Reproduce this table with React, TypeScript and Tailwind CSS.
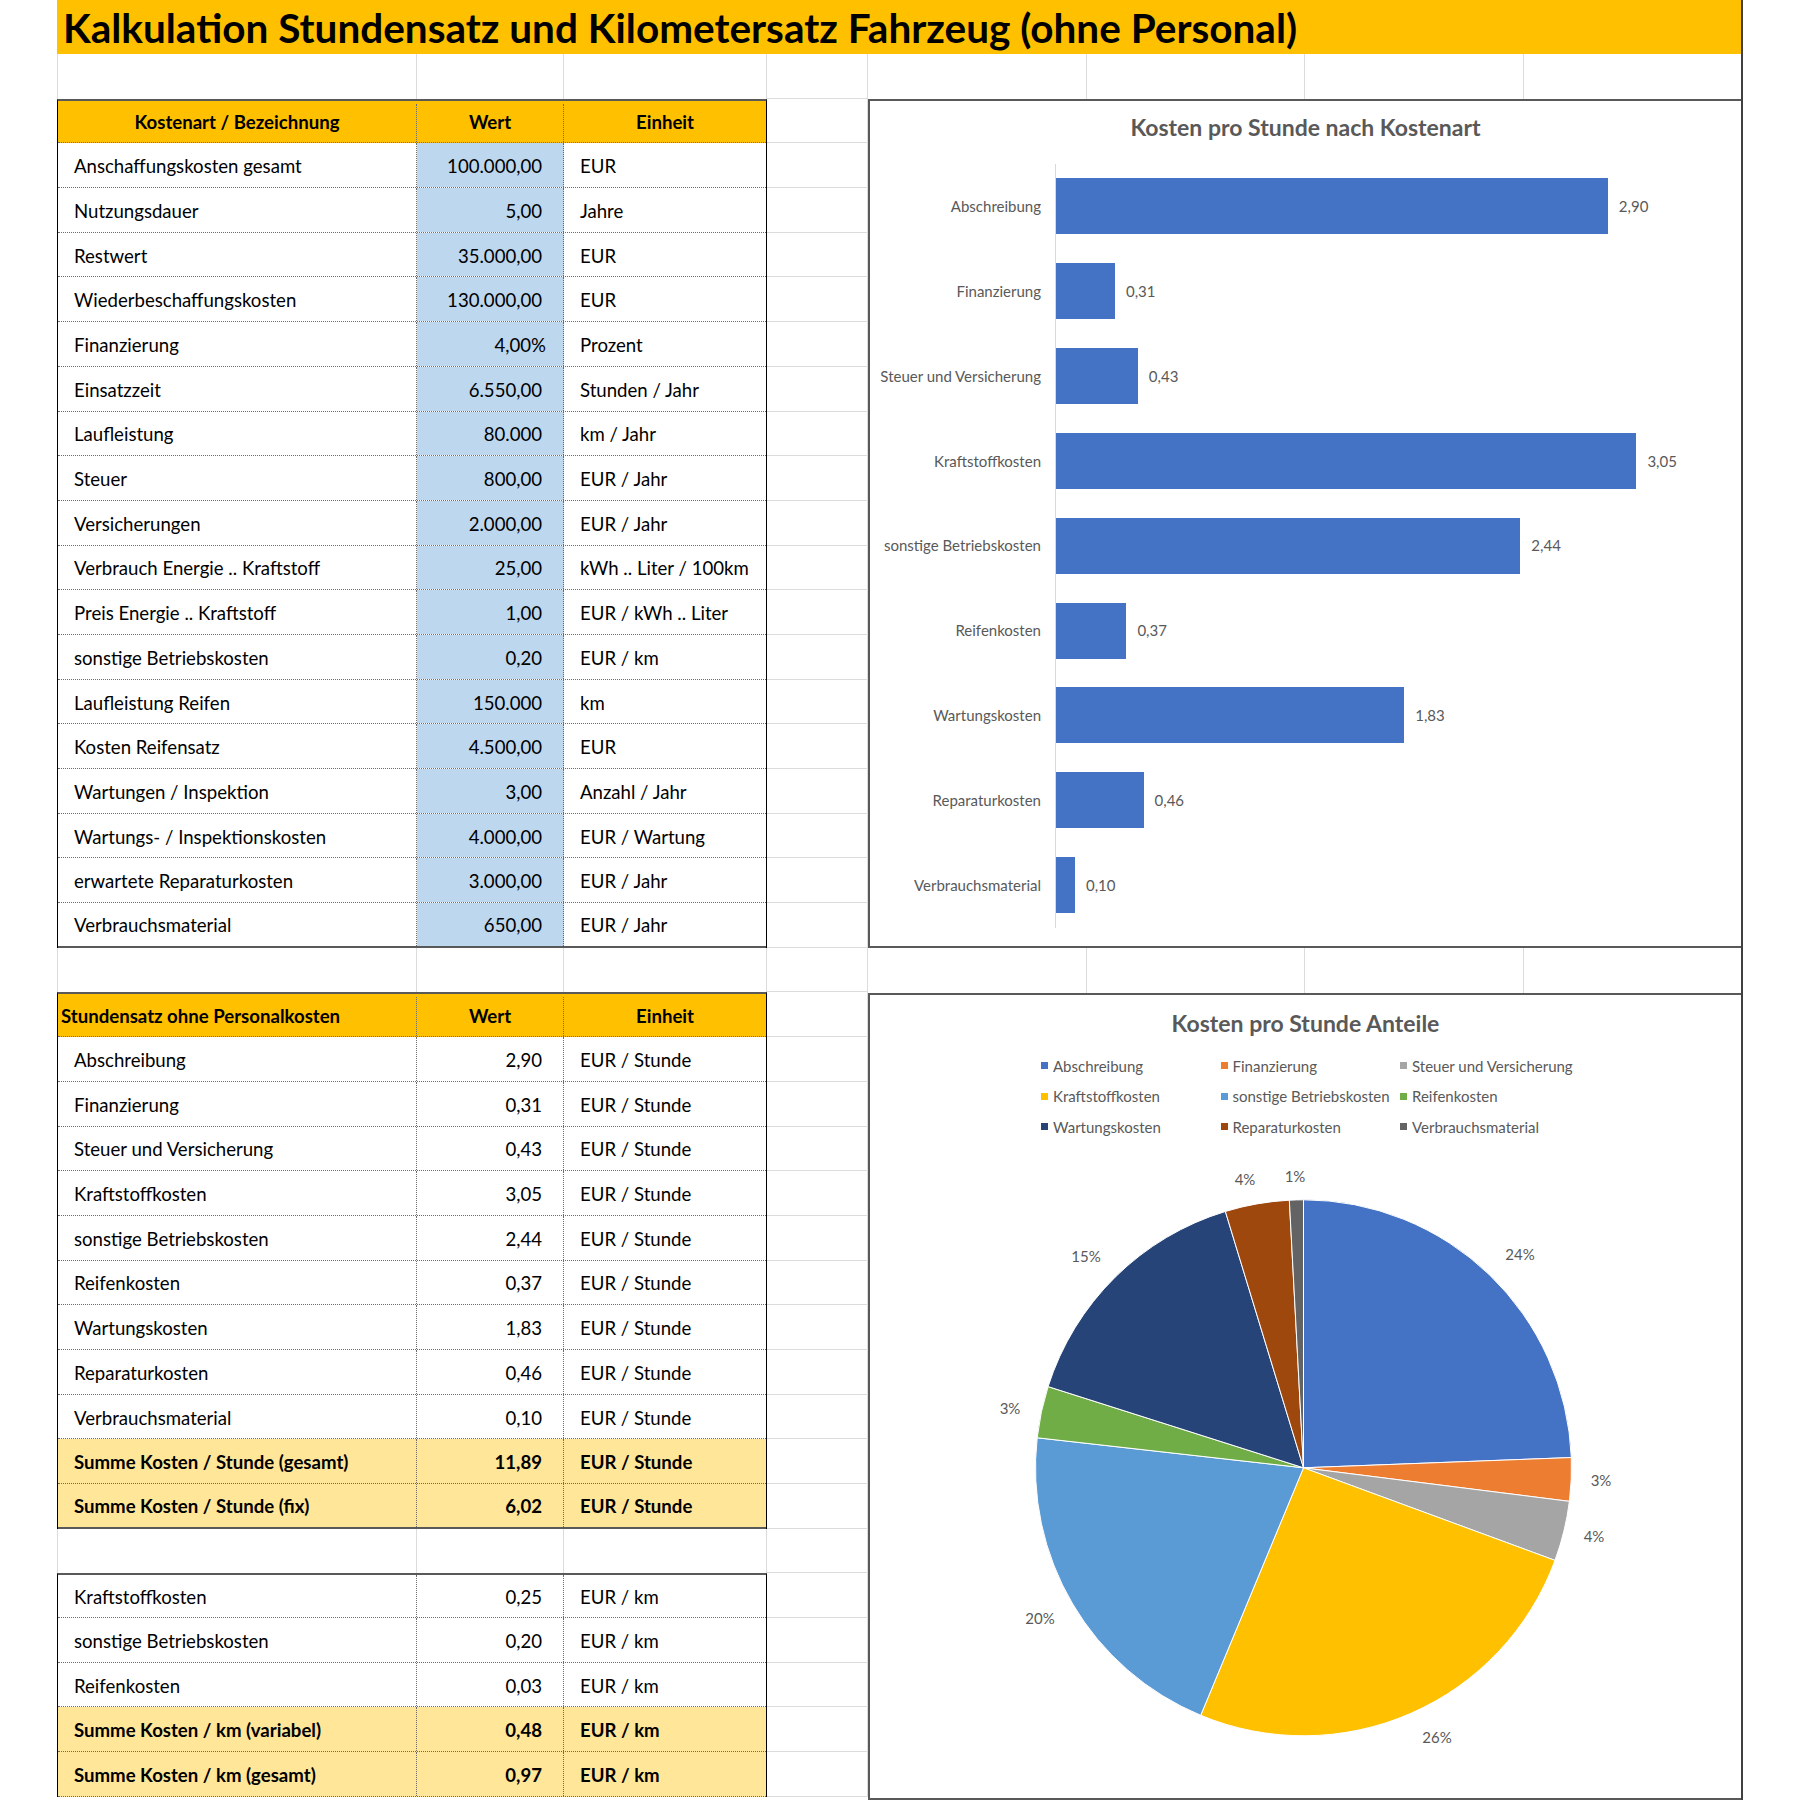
import { ReactNode } from "react";

type Line = { label: string; value: string; unit: string; sum?: boolean; pr?: string };

const inputs: Line[] = [
  { label: "Anschaffungskosten gesamt", value: "100.000,00", unit: "EUR" },
  { label: "Nutzungsdauer", value: "5,00", unit: "Jahre" },
  { label: "Restwert", value: "35.000,00", unit: "EUR" },
  { label: "Wiederbeschaffungskosten", value: "130.000,00", unit: "EUR" },
  { label: "Finanzierung", value: "4,00%", unit: "Prozent", pr: "pr-[17px]" },
  { label: "Einsatzzeit", value: "6.550,00", unit: "Stunden / Jahr" },
  { label: "Laufleistung", value: "80.000", unit: "km / Jahr" },
  { label: "Steuer", value: "800,00", unit: "EUR / Jahr" },
  { label: "Versicherungen", value: "2.000,00", unit: "EUR / Jahr" },
  { label: "Verbrauch Energie .. Kraftstoff", value: "25,00", unit: "kWh .. Liter / 100km" },
  { label: "Preis Energie .. Kraftstoff", value: "1,00", unit: "EUR / kWh .. Liter" },
  { label: "sonstige Betriebskosten", value: "0,20", unit: "EUR / km" },
  { label: "Laufleistung Reifen", value: "150.000", unit: "km" },
  { label: "Kosten Reifensatz", value: "4.500,00", unit: "EUR" },
  { label: "Wartungen / Inspektion", value: "3,00", unit: "Anzahl / Jahr" },
  { label: "Wartungs- / Inspektionskosten", value: "4.000,00", unit: "EUR / Wartung" },
  { label: "erwartete Reparaturkosten", value: "3.000,00", unit: "EUR / Jahr" },
  { label: "Verbrauchsmaterial", value: "650,00", unit: "EUR / Jahr" },
];

const hourly: Line[] = [
  { label: "Abschreibung", value: "2,90", unit: "EUR / Stunde" },
  { label: "Finanzierung", value: "0,31", unit: "EUR / Stunde" },
  { label: "Steuer und Versicherung", value: "0,43", unit: "EUR / Stunde" },
  { label: "Kraftstoffkosten", value: "3,05", unit: "EUR / Stunde" },
  { label: "sonstige Betriebskosten", value: "2,44", unit: "EUR / Stunde" },
  { label: "Reifenkosten", value: "0,37", unit: "EUR / Stunde" },
  { label: "Wartungskosten", value: "1,83", unit: "EUR / Stunde" },
  { label: "Reparaturkosten", value: "0,46", unit: "EUR / Stunde" },
  { label: "Verbrauchsmaterial", value: "0,10", unit: "EUR / Stunde" },
  { label: "Summe Kosten / Stunde (gesamt)", value: "11,89", unit: "EUR / Stunde", sum: true },
  { label: "Summe Kosten / Stunde (fix)", value: "6,02", unit: "EUR / Stunde", sum: true },
];

const perKm: Line[] = [
  { label: "Kraftstoffkosten", value: "0,25", unit: "EUR / km" },
  { label: "sonstige Betriebskosten", value: "0,20", unit: "EUR / km" },
  { label: "Reifenkosten", value: "0,03", unit: "EUR / km" },
  { label: "Summe Kosten / km (variabel)", value: "0,48", unit: "EUR / km", sum: true },
  { label: "Summe Kosten / km (gesamt)", value: "0,97", unit: "EUR / km", sum: true },
];

/* chart data: value, fill, legend swatch class, pie label + its spot */
const costs = [
  { name: "Abschreibung", v: 2.9, text: "2,90", fill: "#4472C4", sw: "bg-[#4472C4]", pct: "24%", lx: 650, ly: 112 },
  { name: "Finanzierung", v: 0.31, text: "0,31", fill: "#ED7D31", sw: "bg-[#ED7D31]", pct: "3%", lx: 731, ly: 338 },
  { name: "Steuer und Versicherung", v: 0.43, text: "0,43", fill: "#A5A5A5", sw: "bg-[#A5A5A5]", pct: "4%", lx: 724, ly: 394 },
  { name: "Kraftstoffkosten", v: 3.05, text: "3,05", fill: "#FFC000", sw: "bg-[#FFC000]", pct: "26%", lx: 567, ly: 595 },
  { name: "sonstige Betriebskosten", v: 2.44, text: "2,44", fill: "#5B9BD5", sw: "bg-[#5B9BD5]", pct: "20%", lx: 170, ly: 476 },
  { name: "Reifenkosten", v: 0.37, text: "0,37", fill: "#70AD47", sw: "bg-[#70AD47]", pct: "3%", lx: 140, ly: 266 },
  { name: "Wartungskosten", v: 1.83, text: "1,83", fill: "#264478", sw: "bg-[#264478]", pct: "15%", lx: 216, ly: 114 },
  { name: "Reparaturkosten", v: 0.46, text: "0,46", fill: "#9E480E", sw: "bg-[#9E480E]", pct: "4%", lx: 375, ly: 37 },
  { name: "Verbrauchsmaterial", v: 0.1, text: "0,10", fill: "#636363", sw: "bg-[#636363]", pct: "1%", lx: 425, ly: 34 },
];

/* ================= SPREADSHEET PIECES ================= */
function HeaderRow({ title, left }: { title: string; left?: boolean }) {
  return (
    <div className="flex h-[42.7px] border-b border-dotted border-[#6b6b6b] bg-[#FFC000] pt-[3px] font-bold">
      <div
        className={`flex w-[359px] items-center border-r border-dotted border-[#6b6b6b] ${
          left ? "pl-[3px]" : "justify-center"
        }`}
      >
        {title}
      </div>
      <div className="flex w-[147px] items-center justify-center border-r border-dotted border-[#6b6b6b]">
        Wert
      </div>
      <div className="flex flex-1 items-center justify-center">Einheit</div>
    </div>
  );
}

function DataRow({ row, blue, last, first }: { row: Line; blue?: boolean; last?: boolean; first?: boolean }) {
  return (
    <div
      className={`flex ${first ? "h-[42.7px]" : "h-[44.7px]"} ${
        last ? "border-b-2 border-solid border-[#595959]" : "border-b border-dotted border-[#6b6b6b]"
      } ${row.sum ? "bg-[#FFE699] font-bold" : ""}`}
    >
      <div className="flex w-[359px] items-center border-r border-dotted border-[#6b6b6b] pl-[16px] pt-[4px]">
        {row.label}
      </div>
      <div
        className={`flex w-[147px] items-center justify-end border-r border-dotted border-[#6b6b6b] pt-[4px] ${
          row.pr ?? "pr-[21px]"
        } ${blue ? "bg-[#BDD7EE]" : ""}`}
      >
        {row.value}
      </div>
      <div className="flex flex-1 items-center pl-[16px] pt-[4px]">{row.unit}</div>
    </div>
  );
}

function Table({ children }: { children: ReactNode }) {
  return (
    <div className="border-l border-r border-t-2 border-l-black border-r-black border-t-[#595959]">{children}</div>
  );
}

function EmptyLeft() {
  return (
    <div className="flex h-[44.7px]">
      <div className="w-[360px] border-l border-r border-[#dcdcdc]" />
      <div className="w-[147px] border-r border-[#dcdcdc]" />
      <div className="flex-1 border-r border-[#dcdcdc]" />
    </div>
  );
}

function EmptyRight() {
  return (
    <div className="flex h-[44.7px]">
      <div className="flex-1 border-r border-[#dcdcdc]" />
      <div className="flex-1 border-r border-[#dcdcdc]" />
      <div className="flex-1 border-r border-[#dcdcdc]" />
      <div className="flex-1" />
    </div>
  );
}

/* ================= CHARTS ================= */
function BarChart() {
  return (
    <div className="flex h-[849.3px] flex-col border-b-2 border-l-2 border-t-2 border-[#595959]">
      <div className="h-[63px] pt-[13px] text-center text-[23px] font-bold leading-[26px] text-[#595959]">
        Kosten pro Stunde nach Kostenart
      </div>
      <div className="flex flex-col">
        {costs.map((c) => (
          <div key={c.name} className="flex h-[84.9px] items-center">
            <div className="w-[185px] pr-[14px] text-right text-[15px] text-[#595959]">{c.name}</div>
            <div className="flex h-full flex-1 items-center border-l border-[#d9d9d9]">
              <div className="h-[56px] bg-[#4472C4]" style={{ width: c.v * 190.3 }} />
              <span className="ml-[11px] text-[15px] text-[#595959]">{c.text}</span>
            </div>
          </div>
        ))}
      </div>
    </div>
  );
}

function PieChart() {
  const total = costs.reduce((s, c) => s + c.v, 0);
  const cx = 433.5;
  const cy = 325.8;
  const r = 268;
  let acc = 0;
  const pt = (a: number) => {
    const t = (a / total) * Math.PI * 2;
    return [cx + r * Math.sin(t), cy - r * Math.cos(t)];
  };

  return (
    <div className="flex h-[807px] flex-col border-b-2 border-l-2 border-t-2 border-[#595959]">
      <div className="pt-[15px] text-center text-[23px] font-bold leading-[26px] text-[#595959]">
        Kosten pro Stunde Anteile
      </div>
      <div className="mt-[15px] grid grid-cols-[179.5px_179.5px_auto] pl-[171px] text-[15px] text-[#595959]">
        {costs.map((c) => (
          <div key={c.name} className="flex h-[30.5px] items-center gap-[5px]">
            <span className={`h-[7px] w-[7px] ${c.sw}`} />
            {c.name}
          </div>
        ))}
      </div>
      <svg width="871" height="650" className="block">
        {costs.map((c) => {
          const [x1, y1] = pt(acc);
          acc += c.v;
          const [x2, y2] = pt(acc);
          const large = c.v / total > 0.5 ? 1 : 0;
          return (
            <path
              key={c.name}
              d={`M${cx},${cy} L${x1},${y1} A${r},${r} 0 ${large} 1 ${x2},${y2} Z`}
              fill={c.fill}
              stroke="#ffffff"
              strokeWidth="1"
            />
          );
        })}
        {costs.map((c) => (
          <text
            key={c.name}
            x={c.lx}
            y={c.ly}
            textAnchor="middle"
            dominantBaseline="central"
            fontSize="15"
            fill="#595959"
          >
            {c.pct}
          </text>
        ))}
      </svg>
    </div>
  );
}

/* ================= MAIN PAGE ================= */
export default function App() {
  return (
    <div className="h-[1800px] w-[1800px] overflow-hidden bg-white font-[Lato,'Liberation_Sans',sans-serif] text-[18.6px] text-black">
      <div className="ml-[57px] w-[1686px]">
        {/* title bar */}
        <div className="flex h-[54px] items-center border-r-2 border-[#404040] bg-[#FFC000] pl-[6px] pt-[3px] text-[40.5px] font-bold leading-none">
          Kalkulation Stundensatz und Kilometersatz Fahrzeug (ohne Personal)
        </div>

        <div className="flex">
          {/* tables */}
          <div className="w-[710px]">
            <EmptyLeft />
            <Table>
              <HeaderRow title="Kostenart / Bezeichnung" />
              {inputs.map((row, i) => (
                <DataRow key={row.label} row={row} blue last={i === inputs.length - 1} />
              ))}
            </Table>
            <EmptyLeft />
            <Table>
              <HeaderRow title="Stundensatz ohne Personalkosten" left />
              {hourly.map((row, i) => (
                <DataRow key={row.label} row={row} last={i === hourly.length - 1} />
              ))}
            </Table>
            <EmptyLeft />
            <Table>
              {perKm.map((row, i) => (
                <DataRow key={row.label} row={row} first={i === 0} />
              ))}
            </Table>
          </div>

          {/* spare column gridlines */}
          <div className="w-[101px]">
            {Array.from({ length: 39 }).map((_, i) => (
              <div key={i} className="h-[44.7px] border-b border-r border-[#dcdcdc]" />
            ))}
          </div>

          {/* charts */}
          <div className="w-[875px] border-r-2 border-[#404040]">
            <EmptyRight />
            <BarChart />
            <EmptyRight />
            <PieChart />
          </div>
        </div>
      </div>
    </div>
  );
}
